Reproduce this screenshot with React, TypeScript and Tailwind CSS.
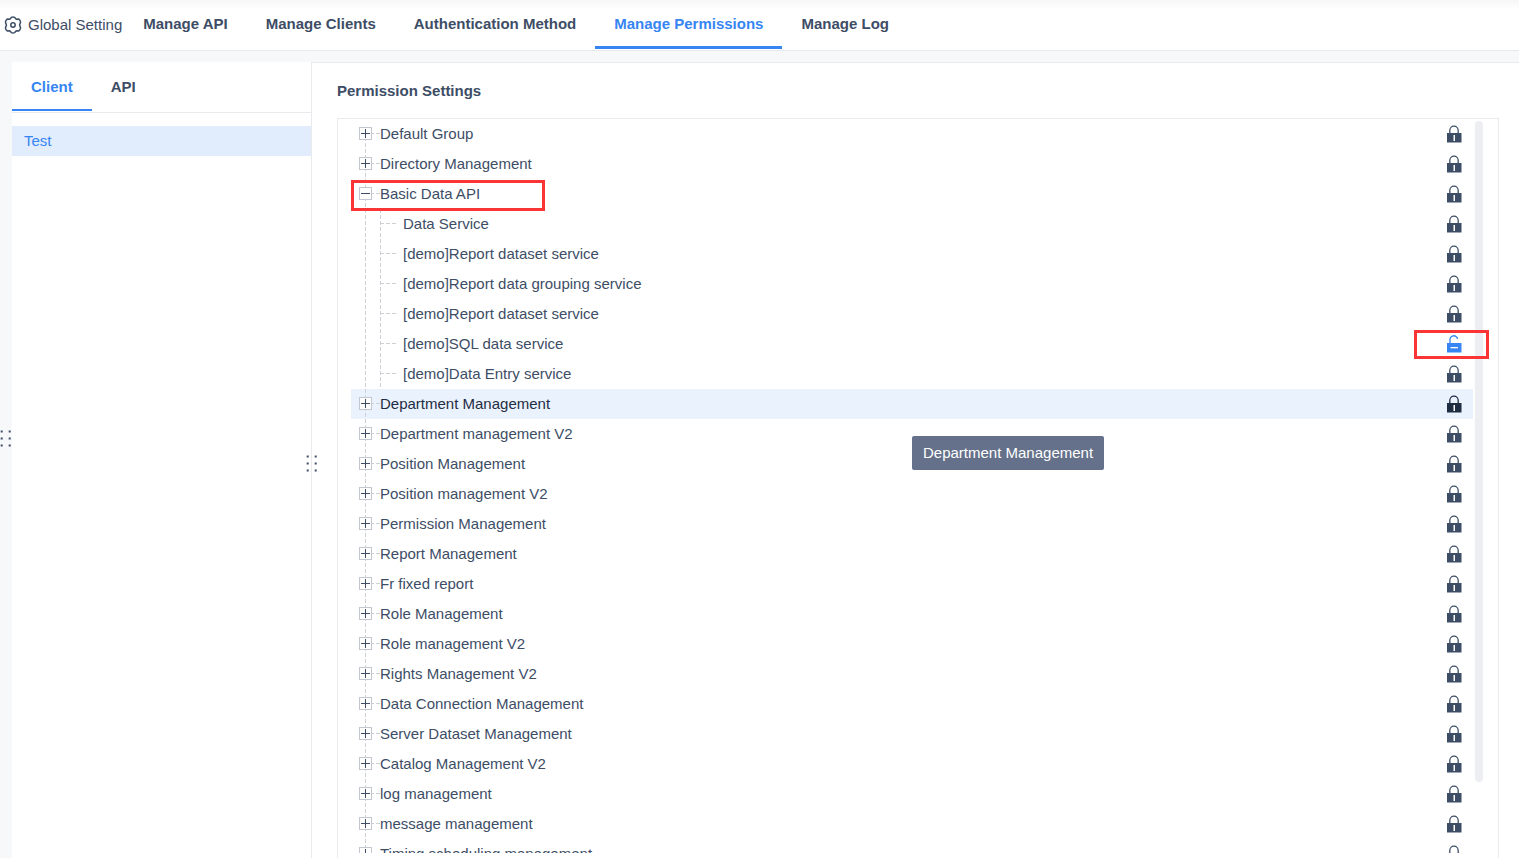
import { useState } from "react";

type TreeNode = {
	id: string;
	label: string;
	unlocked?: boolean;
	marked?: boolean;
	children?: TreeNode[];
};

const topTabs = [
	"Manage API",
	"Manage Clients",
	"Authentication Method",
	"Manage Permissions",
	"Manage Log"
];

const sideTabs = ["Client", "API"];

const tree: TreeNode[] = [
	{ id: "default", label: "Default Group" },
	{ id: "directory", label: "Directory Management" },
	{
		id: "basic",
		label: "Basic Data API",
		marked: true,
		children: [
			{ id: "data-service", label: "Data Service" },
			{ id: "demo-dataset-1", label: "[demo]Report dataset service" },
			{ id: "demo-grouping", label: "[demo]Report data grouping service" },
			{ id: "demo-dataset-2", label: "[demo]Report dataset service" },
			{ id: "demo-sql", label: "[demo]SQL data service", unlocked: true },
			{ id: "demo-entry", label: "[demo]Data Entry service" }
		]
	},
	{ id: "department", label: "Department Management" },
	{ id: "department-v2", label: "Department management V2" },
	{ id: "position", label: "Position Management" },
	{ id: "position-v2", label: "Position management V2" },
	{ id: "permission", label: "Permission Management" },
	{ id: "report", label: "Report Management" },
	{ id: "fixed-report", label: "Fr fixed report" },
	{ id: "role", label: "Role Management" },
	{ id: "role-v2", label: "Role management V2" },
	{ id: "rights-v2", label: "Rights Management V2" },
	{ id: "connection", label: "Data Connection Management" },
	{ id: "dataset", label: "Server Dataset Management" },
	{ id: "catalog-v2", label: "Catalog Management V2" },
	{ id: "log", label: "log management" },
	{ id: "message", label: "message management" },
	{ id: "timing", label: "Timing scheduling management" }
];

// 6px period divides the 30px row, so the dashes join up between rows
const dashY =
	"w-px bg-[repeating-linear-gradient(to_bottom,#cdd0d5_0_4px,transparent_4px_6px)]";
const dashX =
	"h-px bg-[repeating-linear-gradient(to_left,#cdd0d5_0_4px,transparent_4px_6px)]";

function GearIcon() {
	return (
		<svg
			viewBox="0 0 18 18"
			className="size-[18px] shrink-0"
			fill="none"
			stroke="currentColor"
			strokeWidth="1.5"
			strokeLinejoin="round"
			aria-hidden="true"
		>
			<path d="M5.7 3.3 7.3 1.4Q9 .7 10.7 1.4L12.3 3.3 14.8 3.1Q16.3 4.2 16.6 6L15.6 9 16.6 12Q16.3 13.8 14.8 14.9L12.3 14.7 10.7 16.6Q9 17.3 7.3 16.6L5.7 14.7 3.2 14.9Q1.7 13.8 1.4 12L2.4 9 1.4 6Q1.7 4.2 3.2 3.1Z" />
			<circle cx="9" cy="9" r="2.2" />
		</svg>
	);
}

function LockIcon({ open }: { open?: boolean }) {
	return (
		<svg viewBox="0 0 16 18" className="h-[18px] w-4" aria-hidden="true">
			<path
				d={open ? "M4 9V5.2a3.8 3.8 0 0 1 7.6-1.2" : "M3.8 9V5.5a4.2 4.4 0 0 1 8.4 0v3.5"}
				fill="none"
				stroke="currentColor"
				strokeWidth="1.3"
			/>
			<path d="M1 8h14.5v9.5H1z" fill="currentColor" />
			{open ? (
				<path d="M4.500 12h7.500v1.300H4.500z" fill="white" />
			) : (
				<path d="M7.500 10h1.500v6H7.500z" fill="white" />
			)}
		</svg>
	);
}

function Grip() {
	return (
		<svg viewBox="0 0 12 18" className="h-[18px] w-3" fill="#3d4d66" aria-hidden="true">
			{[1, 8, 15].map((y) => (
				<g key={y}>
					<rect x="0.7" y={y - 0.5} width="2" height="2" />
					<rect x="8.7" y={y - 0.5} width="2" height="2" />
				</g>
			))}
		</svg>
	);
}

function TreeRow({
	node,
	child,
	first,
	expanded,
	onToggle,
	unlocked,
	onLock
}: {
	node: TreeNode;
	child?: boolean;
	first?: boolean;
	expanded?: boolean;
	onToggle?: () => void;
	unlocked: boolean;
	onLock: () => void;
}) {
	const active = node.id === "department";
	return (
		<div
			className={`relative flex h-[30px] items-center pr-[11px] pb-px ${
				active ? "bg-[#eaf2fe] text-[#1f2d42]" : ""
			}`}
		>
			<span
				className={`absolute bottom-0 left-[14px] ${dashY} ${
					first ? "top-[18px]" : "top-0"
				}`}
			/>
			{child ? (
				<>
					<span className={`absolute inset-y-0 left-[29px] ${dashY}`} />
					<span className={`ml-[29px] w-4 ${dashX}`} />
					<span className="ml-[7px]">{node.label}</span>
				</>
			) : (
				<>
					<button
						type="button"
						aria-expanded={expanded}
						aria-label={`Toggle ${node.label}`}
						onClick={onToggle}
						className="relative ml-2 flex size-[13px] items-center justify-center border border-[#c3c7cf] bg-white text-[#3d4d66]"
					>
						<svg viewBox="0 0 9 9" className="size-[9px] shrink-0" fill="currentColor" aria-hidden="true">
							<path d="M0 4h9v1H0z" />
							{!expanded && <path d="M4 0h1v9H4z" />}
						</svg>
					</button>
					<span className={`w-2 ${dashX}`} />
					<span>{node.label}</span>
				</>
			)}
			<button
				type="button"
				aria-label={`Permission for ${node.label}`}
				aria-pressed={unlocked}
				onClick={onLock}
				className={`ml-auto ${
					unlocked ? "text-[#3685f2]" : active ? "text-[#1f2d42]" : "text-[#3d4d66]"
				}`}
			>
				<LockIcon open={unlocked} />
			</button>
			{node.marked && (
				<span className="pointer-events-none absolute top-px left-0 z-10 h-[31px] w-[194px] border-3 border-[#fb3535]" />
			)}
			{node.unlocked && (
				<span className="pointer-events-none absolute top-px -right-4 z-10 h-[29px] w-[75px] border-3 border-[#fb3535]" />
			)}
			{active && (
				<span
					role="tooltip"
					className="absolute top-[47px] left-1/2 z-10 rounded-xs bg-[#65718a] px-[11px] py-[7px] leading-5 whitespace-nowrap text-white"
				>
					{node.label}
				</span>
			)}
		</div>
	);
}

export default function App() {
	const [tab, setTab] = useState("Manage Permissions");
	const [sideTab, setSideTab] = useState("Client");
	const [expanded, setExpanded] = useState<string[]>(["basic"]);
	const [unlocked, setUnlocked] = useState<string[]>(["demo-sql"]);

	function toggle(list: string[], id: string) {
		return list.includes(id) ? list.filter((x) => x !== id) : [...list, id];
	}

	return (
		<div className="relative flex h-screen flex-col overflow-hidden bg-[#f7f8fa] font-['Liberation_Sans',Arial,sans-serif] text-[15px] leading-5 text-[#3d4d66]">
			<header className="flex h-[51px] shrink-0 border-b border-[#e8eaed] bg-linear-to-b from-[#f7f7f7] to-white to-20%">
				<button type="button" className="flex items-center gap-[6px] pl-1">
					<GearIcon />
					Global Setting
				</button>
				<nav className="ml-[2px] flex h-[49px]">
					{topTabs.map((name) => (
						<button
							key={name}
							type="button"
							onClick={() => setTab(name)}
							className={`border-b-3 px-[19px] pt-[2px] font-bold ${
								tab === name
									? "border-[#3685f2] text-[#3685f2]"
									: "border-transparent"
							}`}
						>
							{name}
						</button>
					))}
				</nav>
			</header>

			<main className="flex min-h-0 flex-1 pt-[11px] pl-3">
				<aside className="w-[299px] shrink-0 bg-white">
					<nav className="flex h-[51px] border-b border-[#e8eaed] pb-px">
						{sideTabs.map((name) => (
							<button
								key={name}
								type="button"
								onClick={() => setSideTab(name)}
								className={`border-b-2 px-[19px] pt-[2px] font-bold ${
									sideTab === name
										? "border-[#3685f2] text-[#3685f2]"
										: "border-transparent"
								}`}
							>
								{name}
							</button>
						))}
					</nav>
					<button
						type="button"
						className="mt-[13px] flex h-[30px] w-full items-center bg-[#e1ecfd] px-3 text-[#3685f2]"
					>
						Test
					</button>
				</aside>

				<section className="flex min-w-0 flex-1 flex-col border-t border-l border-[#e8eaed] bg-white pr-5 pl-[25px]">
					<h2 className="pt-[18px] pb-[17px] leading-5 font-bold">Permission Settings</h2>
					<div className="flex min-h-0 flex-1 border border-b-0 border-[#e8eaed] pr-[15px] pb-[5px] pl-[13px]">
						<div className="min-h-0 flex-1 [clip-path:inset(0_-20px_0_0)]">
							{tree.map((node, i) => (
								<div key={node.id}>
									<TreeRow
										node={node}
										first={i === 0}
										expanded={expanded.includes(node.id)}
										onToggle={() => setExpanded(toggle(expanded, node.id))}
										unlocked={unlocked.includes(node.id)}
										onLock={() => setUnlocked(toggle(unlocked, node.id))}
									/>
									{expanded.includes(node.id) &&
										node.children?.map((item) => (
											<TreeRow
												key={item.id}
												node={item}
												child
												unlocked={unlocked.includes(item.id)}
												onLock={() => setUnlocked(toggle(unlocked, item.id))}
											/>
										))}
								</div>
							))}
						</div>
						<div className="mt-[2px] ml-[2px] h-9/10 w-2 rounded-full bg-[#edeef1]" />
					</div>
				</section>
			</main>

			<div className="absolute top-[430px] left-0">
				<Grip />
			</div>
			<div className="absolute top-[455px] left-[306px]">
				<Grip />
			</div>
		</div>
	);
}
